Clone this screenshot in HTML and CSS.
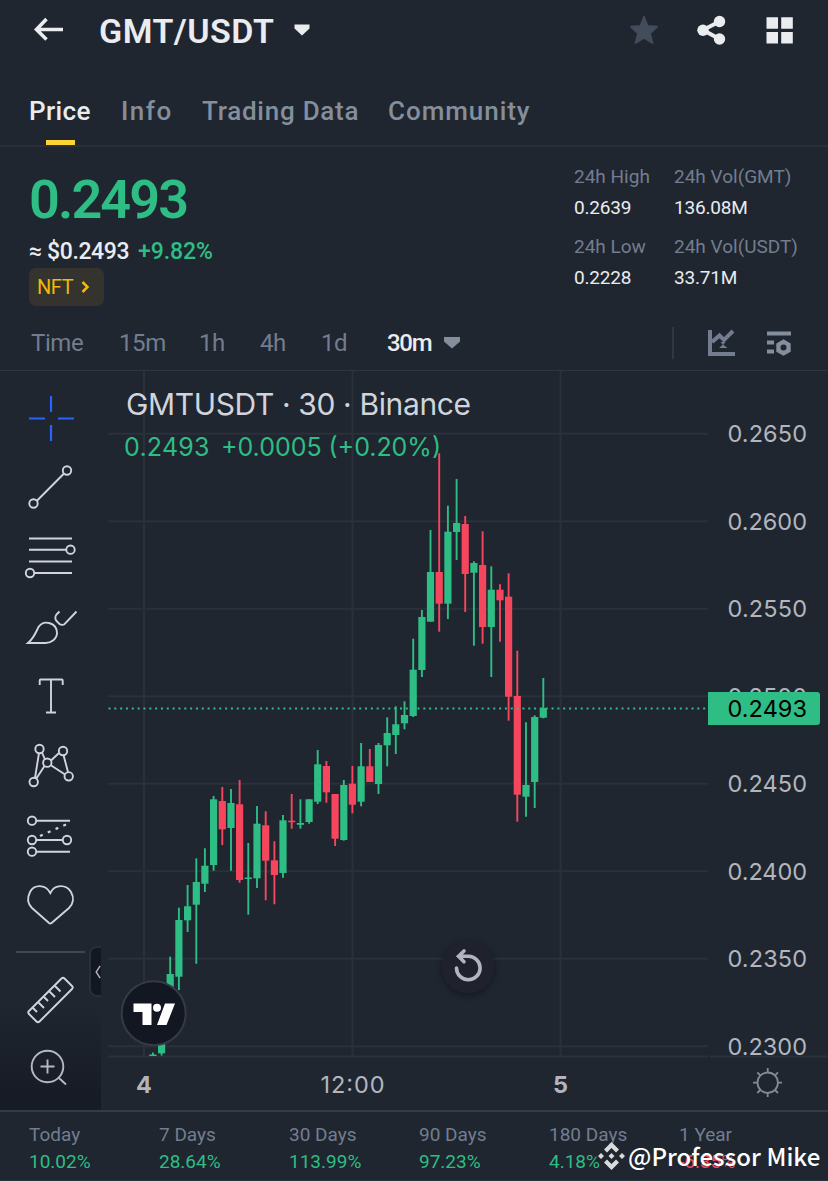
FILE: index.html
```html
<!DOCTYPE html>
<html lang="en">
<head>
<meta charset="utf-8">
<title>GMT/USDT</title>
<link rel="stylesheet" href="styles.css">
</head>
<body>
<div class="app">
  <header class="topbar">
    <svg class="back" width="30" height="26" viewBox="0 0 30 26"><path d="M29 13.500H3M12.500 3L2.500 13.500L12.500 23.500" fill="none" stroke="#eaecef" stroke-width="3.600"/></svg>
    <h1 class="pair">GMT/USDT</h1>
    <svg class="caret" width="16" height="12" viewBox="0 0 16 12"><path d="M.5.500h15v4L8 11.500.5 4.500z" fill="#eaecef"/></svg>
    <div class="actions">
      <svg width="32" height="32" viewBox="0 0 32 32"><path d="M16 3l3.500 9 9.500.8-7.200 6.500 2.600 9.700L16 23.700 7.600 29l2.600-9.700L3 12.800l9.500-.8z" fill="#434c5a" stroke="#434c5a" stroke-width="2" stroke-linejoin="round"/></svg>
      <svg width="32" height="32" viewBox="1 0 32 32"><path d="M24.500 7.500L8 16l16.500 9" fill="none" stroke="#eaecef" stroke-width="4"/><g fill="#eaecef"><circle cx="24.500" cy="7.500" r="5.700"/><circle cx="8" cy="16.200" r="5.700"/><circle cx="24.500" cy="25" r="5.700"/></g></svg>
      <svg width="32" height="32" viewBox="0 0 32 32"><path d="M2.500 3.200h11.500v11.500H2.500zM17.200 3.200h11.600v11.500H17.200zM2.500 18h11.500v11.500H2.500zM17.200 18h11.600v11.500H17.200z" fill="#eaecef"/></svg>
    </div>
  </header>
  <nav class="tabs">
    <span class="tab tab-on">Price</span><span class="tab tab-info">Info</span><span class="tab tab-data">Trading Data</span><span class="tab tab-comm">Community</span>
  </nav>

  <section class="summary">
    <div class="quote">
      <div class="last">0.2493</div>
      <div class="fiat"><span>≈ $0.2493</span><span class="gain">+9.82%</span></div>
      <div class="tag">NFT<svg width="9" height="12" viewBox="0 0 9 12"><path d="M1.500 1L6.500 6L1.500 11" fill="none" stroke="#f0b90b" stroke-width="2.500"/></svg></div>
    </div>
    <dl class="stats">
      <div><dt>24h High</dt><dd>0.2639</dd></div>
      <div><dt>24h Vol(GMT)</dt><dd>136.08M</dd></div>
      <div><dt>24h Low</dt><dd>0.2228</dd></div>
      <div><dt>24h Vol(USDT)</dt><dd>33.71M</dd></div>
    </dl>
  </section>

  <nav class="periods">
    <span>Time</span><span>15m</span><span>1h</span><span>4h</span><span>1d</span><span class="p-on">30m</span>
    <svg class="p-caret" width="16" height="12" viewBox="0 0 16 12"><path d="M0 0h16v4.500L8 11.500 0 4.500z" fill="#848e9c"/></svg>
    <div class="p-tools">
      <svg width="28" height="28" viewBox="0 0 28 28"><g fill="none" stroke="#737d8f" stroke-width="4"><path d="M3 1v24h25"/><path d="M5 13L12.500 6.500L17 11L26 2"/></g><path d="M12 19l4-3.500 4.500 3.500zM13.500 13h5l-2.500 3z" fill="#737d8f"/></svg>
      <svg width="26" height="28" viewBox="0 0 26 28"><path d="M1 2.500h24v4H1zM1 11.500h7v4H1zM1 20.500h7v4H1zM17.500 10.200l7.200 4.200v8.300l-7.200 4.100-7.200-4.100v-8.300z" fill="#848e9c"/><circle cx="17.500" cy="18.500" r="3" fill="#1f262f"/></svg>
    </div>
  </nav>

  <main class="chart">
    <aside class="draw">
      <svg class="blue" viewBox="0 382 101 70"><path d="M51 396v16M51 425v16M29 418.500h16M58 418.500h16"/></svg>
      <svg viewBox="0 452 101 70"><path d="M36.700 501L64 473.500"/><circle cx="33.500" cy="503.500" r="4.200"/><circle cx="67" cy="470.500" r="4.200"/></svg>
      <svg viewBox="0 522 101 70"><path d="M29 538.500h43M29 549.700h37M29 561.500h43M34.500 573h37.500"/><circle cx="70.500" cy="549.700" r="4.200"/><circle cx="30" cy="573" r="4.200"/></svg>
      <svg viewBox="0 592 101 70"><path d="M28 643C34 638 36 632 38.500 627C44 619 57 623 57 633C57 639 51 643 45.500 643ZM59.500 611.500L56.500 614.500C54.500 617 55 620 57.500 622L59.500 624C61.500 625.500 64 625 65 623.500L76.500 611.500"/></svg>
      <svg viewBox="0 662 101 70"><path d="M39.700 685v-4.500q0-1 1-1h21q1 0 1 1v4.500M51 680v32M46 712.500h10"/></svg>
      <svg viewBox="0 732 101 70"><path d="M39 753L35 778M42 752.500L45 759.500M51 760.500L59 753M50.500 765L65 774.500M44.500 766L36 779M63.500 755L68 772"/><circle cx="39.500" cy="749" r="4.200"/><circle cx="63" cy="751" r="4.200"/><circle cx="47.300" cy="762.700" r="4.200"/><circle cx="33.700" cy="782" r="4.200"/><circle cx="68.700" cy="776.300" r="4.200"/></svg>
      <svg viewBox="0 802 101 70"><path d="M36.500 820.700h33.500M36.500 840h26M36.500 851.700h33.500"/><path d="M40 836L67 824" stroke-width="2.200" stroke-dasharray="3 5.500"/><circle cx="32" cy="820.700" r="4.200"/><circle cx="32" cy="840" r="4.200"/><circle cx="67" cy="840" r="4.200"/><circle cx="32" cy="851.700" r="4.200"/></svg>
      <svg viewBox="0 872 101 70"><path d="M50.300 893C45 883.500 34 884.500 30 892C27 898 28 904 32 908L49 923Q50.300 924 51.600 923L69 908C73 904 74.500 898 71 892C66.500 884.500 55 883.500 50.300 893Z"/></svg>
      <hr class="rule">
      <svg viewBox="0 964 101 70"><path d="M29 1011L61.500 978.500Q63 977 64.500 978.500L72 986Q73.500 987.500 72 989L39.500 1021.500Q38 1023 36.500 1021.500L29 1014Q27.500 1012.500 29 1011ZM33 1008l4 4M38.500 1002.500l5.500 5.500M44 997l4 4M49.500 991.500l5.500 5.500M55 986l5.500 5.500"/></svg>
      <svg class="loupe" viewBox="0 1034 101 70"><circle cx="47.500" cy="1066.500" r="15.800"/><path d="M40.500 1066.500h14M47.500 1059.500v14M59 1078l7 6.500"/></svg>
    </aside>
    <svg class="plot" width="727" height="739" viewBox="101 371 727 739">
      <g class="grid">
        <path d="M144 371V1056M352.500 371V1056M560.500 371V1056"/>
        <path d="M108 433.700H708M108 521.200H708M108 608.700H708M108 696.200H708M108 783.700H708M108 871.200H708M108 958.700H708M108 1046.200H708"/>
        <path d="M108 1056.500H708M710 1056.500H828"/>
      </g>
      <g id="candles"></g>
      <path d="M108.500 708.500H708" stroke="#2ebd85" stroke-width="2" stroke-dasharray="2 3.830"/>
      <text class="name" x="126" y="415" textLength="345">GMTUSDT · 30 · Binance</text>
      <text class="ohlc" x="124" y="456" textLength="85.500">0.2493</text>
      <text class="ohlc" x="221" y="456" textLength="220">+0.0005 (+0.20%)</text>
      <g class="axis">
        <text x="727.500" y="442" textLength="79.500">0.2650</text>
        <text x="727.500" y="529.500" textLength="79.500">0.2600</text>
        <text x="727.500" y="617" textLength="79.500">0.2550</text>
        <text x="727.500" y="704.500" textLength="79.500">0.2500</text>
        <text x="727.500" y="792" textLength="79.500">0.2450</text>
        <text x="727.500" y="879.500" textLength="79.500">0.2400</text>
        <text x="727.500" y="967" textLength="79.500">0.2350</text>
        <text x="727.500" y="1054.500" textLength="79.500">0.2300</text>
        <text class="day" x="136" y="1093">4</text>
        <text x="320.500" y="1093" textLength="64">12:00</text>
        <text class="day" x="553" y="1093">5</text>
      </g>
      <path d="M708 692h109q3 0 3 3v27q0 3-3 3H708z" fill="#2ebd85"/>
      <text class="mark" x="727.500" y="717" textLength="79.500">0.2493</text>
      <circle class="reset" cx="468" cy="967" r="26.500"/>
      <path d="M456.500 968a11.800 11.800 0 1 0 11.800-11.800h-6M464 951l-5.500 5.300 5.500 5.500" fill="none" stroke="#b2b5be" stroke-width="3.600" stroke-linecap="round"/>
      <circle cx="153.700" cy="1013.200" r="32" fill="#131722" stroke="#363a45" stroke-width="2"/>
      <path d="M133.500 1003.500H151.500V1025H142.500V1012H133.500zM165 1003.500H175L166.500 1025H157z" fill="#fff"/><circle cx="157" cy="1007.700" r="4" fill="#fff"/>
      <g fill="none" stroke="#868993" stroke-width="1.800"><circle cx="767.700" cy="1082.700" r="10.200"/><path d="M767.700 1072v-4M767.700 1093v4M757 1082.700h-4M778 1082.700h4M760.300 1075.300l-3-3M775 1075.300l3-3M760.300 1090l-3 3M775 1090l3 3"/></g>
    </svg>
    <div class="fold"><svg width="8" height="16" viewBox="0 0 8 16"><path d="M7 1L2.500 8L7 15" fill="none" stroke="#b2b5be" stroke-width="1.600"/></svg></div>
  </main>

  <footer class="returns">
    <div><span>Today</span><b>10.02%</b></div>
    <div><span>7 Days</span><b>28.64%</b></div>
    <div><span>30 Days</span><b>113.99%</b></div>
    <div><span>90 Days</span><b>97.23%</b></div>
    <div><span>180 Days</span><b>4.18%</b></div>
    <div><span>1 Year</span><b class="loss">-6.35%</b></div>
  </footer>
  <div class="credit">
    <svg width="27" height="28" viewBox="0 0 27 28"><path d="M13.500 0l7.500 7.500-3 3-4.500-4.500-4.500 4.500-3-3zM13.500 28l7.500-7.500-3-3-4.500 4.500-4.500-4.500-3 3zM3 11l3 3-3 3-3-3zM24 11l3 3-3 3-3-3zM13.500 11l3 3-3 3-3-3z" fill="#d9dadb"/></svg>
    <span>@Professor Mike</span>
  </div>
</div>
<script src="chart.js"></script>
</body>
</html>
```
FILE: styles.css
```css
* { box-sizing: border-box; }
body { margin: 0; background: #1f262f; color: #eaecef; font-family: Roboto, "Liberation Sans", sans-serif; }
.app { position: relative; width: 828px; height: 1181px; overflow: hidden; display: flex; flex-direction: column; border-bottom: 1px solid #2b323e; }
.topbar { height: 76px; flex: none; display: flex; align-items: flex-start; padding: 0 32px 0 34px; }
.back { margin-top: 16px; }
.pair { margin: 9px 0 0 35px; width: 195px; font-size: 34px; line-height: 44px; font-weight: 600; letter-spacing: .5px; white-space: nowrap; }
.caret { margin-top: 24px; }
.actions { margin: 14px 1px 0 auto; display: flex; gap: 36px; position: relative; left: 1px; }
.tabs { height: 71px; flex: none; display: flex; padding: 17px 0 0 29px; border-bottom: 2px solid #29303b; font-size: 26px; line-height: 36px; font-weight: 500; letter-spacing: .75px; color: #848e9c; white-space: nowrap; }
.tab { height: 52px; }
.tab-on { width: 92px; letter-spacing: .4px; color: #eaecef; background: linear-gradient(#fcd535, #fcd535) 17px 47px / 29px 5px no-repeat; }
.tab-info { width: 81px; letter-spacing: 1.500px; }
.tab-data { width: 186px; }
.tab-comm { letter-spacing: .95px; }
.summary { height: 168px; flex: none; display: flex; justify-content: space-between; padding: 0 20px 0 29px; }
.last { margin-top: 22px; font-size: 54px; line-height: 62px; font-weight: 600; letter-spacing: -1.900px; color: #2ebd85; }
.fiat { margin-top: 7px; font-size: 23px; line-height: 28px; font-weight: 500; letter-spacing: -.4px; display: flex; gap: 9px; }
.gain { color: #2ebd85; letter-spacing: -.1px; }
.tag { margin-top: 2px; width: 75px; height: 38px; border-radius: 7px; background: #35332d; color: #f0b90b; font-size: 20px; line-height: 39px; letter-spacing: -.4px; padding-left: 8px; display: flex; align-items: center; gap: 8px; }
.stats { margin: 17px 0 0; display: grid; grid-template-columns: 100px 134px; grid-auto-rows: 70px; font-size: 19px; line-height: 26px; white-space: nowrap; }
.stats > div { display: flex; flex-direction: column; gap: 5px; }
.stats dt { color: #737d8f; }
.stats dd { margin: 0; letter-spacing: -.2px; }
.periods { height: 56px; flex: none; display: flex; align-items: center; padding: 1px 0 0 31px; border-bottom: 1px solid #2e3541; color: #737d8f; font-size: 24px; letter-spacing: -.4px; white-space: nowrap; }
.periods span { width: 61px; }
.periods span:nth-child(1) { width: 88px; }
.periods span:nth-child(2) { width: 80px; }
.periods span:nth-child(5) { width: 66px; }
.periods .p-on { width: 57px; color: #eaecef; font-weight: 500; letter-spacing: -1.300px; }
.p-tools { margin-left: auto; padding: 2px 36px 2px 33px; border-left: 2px solid #2f3744; display: flex; gap: 31px; }
.chart { position: relative; height: 739px; flex: none; display: grid; grid-template-columns: 101px 727px; overflow: hidden; }
.draw { display: flex; flex-direction: column; padding-top: 11px; background: linear-gradient(transparent 86%, #171b26 98%); }
.draw svg { width: 101px; height: 70px; flex: none; fill: none; stroke: #d1d4dc; stroke-width: 1.900; }
.draw .blue { stroke: #2962ff; stroke-width: 2.200; }
.draw .loupe { opacity: .85; }
.rule { margin: 9px 16px 11px; width: 69px; height: 2px; border: 0; background: #434651; flex: none; }
.fold { position: absolute; left: 89px; top: 575px; width: 12px; height: 51px; padding-left: 3px; display: flex; align-items: center; background: #131722; border: 2px solid #2a2e39; border-right: 0; border-radius: 8px 0 0 8px; }
.grid { stroke: #2b313b; stroke-width: 2; fill: none; }
.up { stroke: #2ebd85; }
.down { stroke: #f6465d; }
.plot text { font-family: Inter, "Liberation Sans", sans-serif; }
.plot .name { font-size: 30px; fill: #d1d4dc; }
.plot .ohlc { font-size: 25px; fill: #2ebd85; }
.axis { font-size: 23.500px; fill: #b2b5be; }
.axis .day { font-weight: 700; }
.plot .mark { font-size: 23.500px; fill: #000; }
.reset { fill: #1f222d; filter: drop-shadow(0 2px 3px #131722); }
.returns { flex: 1; display: grid; grid-template-columns: repeat(6, 130px); padding: 9px 0 0 29px; border-top: 2px solid #343b48; font-size: 19px; line-height: 27px; }
.returns div { display: flex; flex-direction: column; }
.returns span { color: #737d8f; }
.returns b { font-weight: 400; color: #2ebd85; }
.returns .loss { color: #f6465d; }
.credit { position: absolute; left: 598px; top: 1138px; display: flex; align-items: center; gap: 3px; white-space: nowrap; color: #fff; font: 500 24px/36px "Noto Sans CJK SC", sans-serif; letter-spacing: .06px; }
```
FILE: chart.js
```js
// Each row: direction, body top, body bottom, wick top, wick bottom.
const candles = [
  [1,1054.5,1056,1052.5,1056],[1,992,1053.3,988,1055.5],[1,974,992,956.7,994],[1,920,976.7,907.7,990],
  [1,906.3,920.3,885,932],[1,882,904.7,858.3,963.7],[1,865.7,883.7,848.3,892],[1,799.3,865,796,870.7],
  [0,801,829.3,787,845],[1,803,828,789,870.7],[0,804.3,880,780,882.7],[1,877.5,879,843,914.7],
  [1,823.7,878.3,806,888],[0,825.3,860.7,811.3,900.3],[0,860.3,875,841.3,904.3],[1,820.3,873,815,877.7],
  [0,820.7,822.2,794,828.7],[1,823,824.8,799.3,828.7],[1,799.3,822,799.3,823.7],[1,764.3,801.7,750,804],
  [0,766,792.3,761,802.7],[0,794,838.7,794,846],[1,785,840,780,840.7],[0,783.7,804.7,766,813.3],
  [1,766.3,801.7,743,806.3],[0,766.3,782,749,782],[1,745,784,743,794],[1,733,745.3,717.3,766.3],
  [1,724.3,735,706.3,754],[1,715,723.3,701.3,729.3],[1,669.7,716,638.7,717],[1,617,670,610,677],
  [1,572,621.7,530,621.7],[0,572,603.7,453.3,631.7],[1,531.7,603.7,505.7,619],[1,523,532,479,560],
  [0,524,574,516,612],[1,563,572.7,561.3,645.7],[0,565,627,531.3,643.7],[1,589.7,627,566.3,677],
  [0,589.7,600.3,584.3,641.7],[0,596.7,696.7,573.3,720.7],[0,696,794.7,650.7,821.7],[1,785,796.7,722.3,816.7],
  [1,717,782,715.3,808],[1,708,717.7,678,718.3]
];
const layer = document.getElementById('candles');
candles.forEach(([up, top, bottom, high, low], i) => {
  const x = (144.2 + (i + 1) * 8.677).toFixed(1);
  [[high, low, 1.9], [top, bottom, 7.2]].forEach(([a, b, w]) => {
    const p = document.createElementNS('http://www.w3.org/2000/svg', 'path');
    p.setAttribute('d', `M${x} ${a}V${b}`);
    p.setAttribute('stroke-width', w);
    p.setAttribute('class', up ? 'up' : 'down');
    layer.appendChild(p);
  });
});
```
